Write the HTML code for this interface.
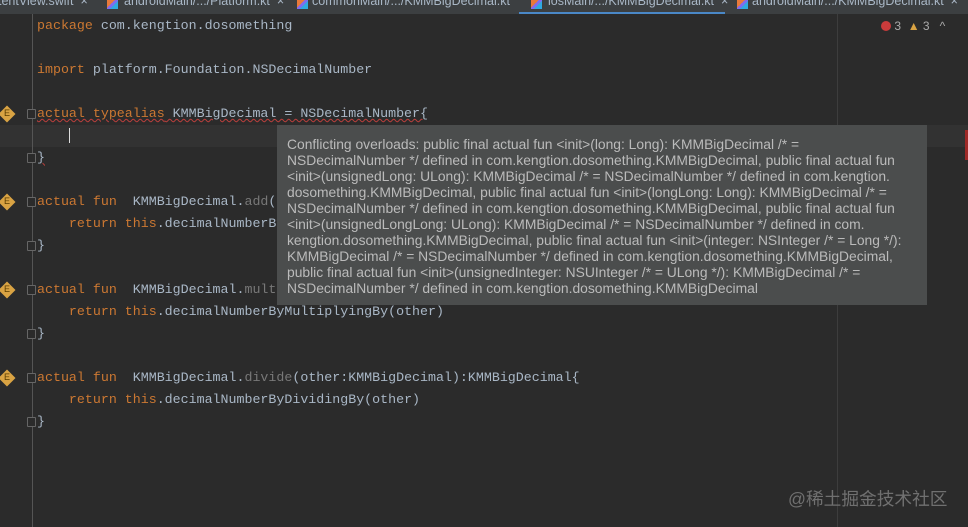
<!DOCTYPE html>
<html><head><meta charset="utf-8"><style>
body{margin:0;width:968px;height:527px;background:#2b2b2b;overflow:hidden;position:relative;font-family:"Liberation Mono",monospace}
.tabs{position:absolute;left:0;top:0;width:968px;height:14px;background:#3c3f41;overflow:hidden;font-family:"Liberation Sans",sans-serif;font-size:12.5px;color:#a9b7c6}
.tabs span{position:absolute;top:-6px;white-space:nowrap}
.ki{position:absolute;top:0;width:11px;height:9px;background:linear-gradient(135deg,#e8793a 0 40%,#7f6cf0 40% 60%,#2fa9e0 60%)}
.act{position:absolute;left:519px;top:12px;width:206px;height:2px;background:#4a88c7}
.gline{position:absolute;left:32px;top:14px;width:1px;height:513px;background:#555}
.rline{position:absolute;left:837px;top:14px;width:1px;height:513px;background:#3d3d3d}
.cl{position:absolute;left:0;top:125px;width:968px;height:22px;background:#323232}
.code{position:absolute;left:37px;top:15px;font-size:13.3px;line-height:22px;color:#a9b7c6;white-space:pre}
.k{color:#cc7832}.g{color:#787878}
.sq{text-decoration:underline wavy #bc3f3c;text-decoration-thickness:1px}
.e{position:absolute;left:0;width:12px;height:12px;background:#d9a343;transform:rotate(45deg);}
.el{position:absolute;left:0;width:14px;text-align:center;font:9px "Liberation Sans",sans-serif;color:#5a3d00}
.fold{position:absolute;left:27px;width:7px;height:8px;border:1px solid #666;border-radius:1px;background:#2b2b2b}
.tip{position:absolute;left:277px;top:125px;width:650px;height:180px;background:#4b4d4d;box-sizing:border-box;padding:11px 10px;font:13.85px/16px "Liberation Sans",sans-serif;color:#bbbbbb;white-space:nowrap}
.wm{position:absolute;left:788px;top:485px;font:17.7px "Liberation Sans","Noto Sans CJK SC",sans-serif;color:#707070}
.ind{position:absolute;top:19px;font:12px "Liberation Sans",sans-serif;color:#aaa}
</style></head><body>
<div class="tabs">
<span style="left:-2px">tentView.swift &nbsp;×</span>
<i class="ki" style="left:107px"></i><span style="left:124px">androidMain/.../Platform.kt &nbsp;×</span>
<i class="ki" style="left:297px"></i><span style="left:312px">commonMain/.../KMMBigDecimal.kt</span>
<i class="ki" style="left:531px"></i><span style="left:548px">iosMain/.../KMMBigDecimal.kt &nbsp;×</span>
<i class="ki" style="left:737px"></i><span style="left:752px">androidMain/.../KMMBigDecimal.kt &nbsp;×</span>
</div>
<div class="act"></div>
<div class="cl"></div>
<div class="gline"></div>
<div class="rline"></div>
<div style="position:absolute;left:965px;top:130px;width:3px;height:30px;background:#9e2927"></div>
<div class="ind" style="left:881px"><span style="display:inline-block;width:10px;height:10px;border-radius:50%;background:#c93b3b;vertical-align:-1px"></span> 3 &nbsp;<span style="color:#d9a343">▲</span> 3 &nbsp; ^</div>
<div class="code"><span class="k">package</span> com.kengtion.dosomething

<span class="k">import</span> platform.Foundation.NSDecimalNumber

<span class="sq"><span class="k">actual typealias</span> KMMBigDecimal = NSDecimalNumber{</span>
    <span style="border-left:1px solid #ddd"> </span>
<span class="sq">}</span>

<span class="k">actual fun</span>  KMMBigDecimal.<span class="g">add</span>(other:KMMBigDecimal):KMMBigDecimal{
    <span class="k">return this</span>.decimalNumberByAdding(other)
}

<span class="k">actual fun</span>  KMMBigDecimal.<span class="g">multiply</span>(other:KMMBigDecimal):KMMBigDecimal{
    <span class="k">return this</span>.decimalNumberByMultiplyingBy(other)
}

<span class="k">actual fun</span>  KMMBigDecimal.<span class="g">divide</span>(other:KMMBigDecimal):KMMBigDecimal{
    <span class="k">return this</span>.decimalNumberByDividingBy(other)
}</div>
<div class="e" style="top:108px;left:1px"></div><div class="el" style="top:108px">E</div>
<div class="e" style="top:196px;left:1px"></div><div class="el" style="top:196px">E</div>
<div class="e" style="top:284px;left:1px"></div><div class="el" style="top:284px">E</div>
<div class="e" style="top:372px;left:1px"></div><div class="el" style="top:372px">E</div>
<div class="fold" style="top:109px"></div><div class="fold" style="top:153px"></div>
<div class="fold" style="top:197px"></div><div class="fold" style="top:241px"></div>
<div class="fold" style="top:285px"></div><div class="fold" style="top:329px"></div>
<div class="fold" style="top:373px"></div><div class="fold" style="top:417px"></div>
<div class="tip">Conflicting overloads: public final actual fun &lt;init&gt;(long: Long): KMMBigDecimal /* =<br>NSDecimalNumber */ defined in com.kengtion.dosomething.KMMBigDecimal, public final actual fun<br>&lt;init&gt;(unsignedLong: ULong): KMMBigDecimal /* = NSDecimalNumber */ defined in com.kengtion.<br>dosomething.KMMBigDecimal, public final actual fun &lt;init&gt;(longLong: Long): KMMBigDecimal /* =<br>NSDecimalNumber */ defined in com.kengtion.dosomething.KMMBigDecimal, public final actual fun<br>&lt;init&gt;(unsignedLongLong: ULong): KMMBigDecimal /* = NSDecimalNumber */ defined in com.<br>kengtion.dosomething.KMMBigDecimal, public final actual fun &lt;init&gt;(integer: NSInteger /* = Long */):<br>KMMBigDecimal /* = NSDecimalNumber */ defined in com.kengtion.dosomething.KMMBigDecimal,<br>public final actual fun &lt;init&gt;(unsignedInteger: NSUInteger /* = ULong */): KMMBigDecimal /* =<br>NSDecimalNumber */ defined in com.kengtion.dosomething.KMMBigDecimal</div>
<div class="wm">@稀土掘金技术社区</div>
</body></html>
